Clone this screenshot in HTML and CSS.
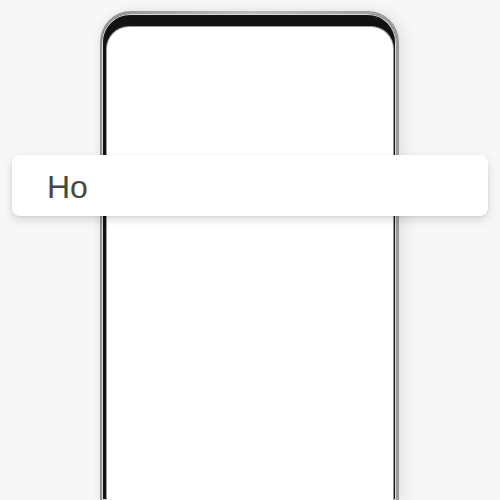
FILE: index.html
```html
<!DOCTYPE html>
<html>
<head>
<meta charset="utf-8">
<link rel="stylesheet" href="styles.css">
</head>
<body>
<div class="stage">
  <div class="phone">
    <div class="bezel">
      <div class="screen"></div>
    </div>
  </div>
  <div class="card"><span class="typed">Ho</span></div>
</div>
</body>
</html>
```
FILE: styles.css
```css
html, body {
  margin: 0;
  padding: 0;
  width: 500px;
  height: 500px;
  overflow: hidden;
  background: #f7f7f7;
  font-family: "Liberation Sans", Arial, sans-serif;
}
.stage {
  position: relative;
  width: 500px;
  height: 500px;
  overflow: hidden;
  display: flex;
  justify-content: flex-start;
  align-items: flex-start;
}
.phone {
  margin-left: 100px;
  margin-top: 11px;
  width: 299px;
  height: 489px;
  box-sizing: border-box;
  padding: 3px 3px 0 2px;
  border-radius: 31px 31px 0 0;
  background: linear-gradient(90deg, #909090, #bdbdbd 50%, #9a9a9a);
  box-shadow: 5px 2px 16px rgba(0, 0, 0, 0.09), -2px 0 6px rgba(0, 0, 0, 0.04);
  display: flex;
}
.bezel {
  flex: 1;
  border-radius: 28px 28px 0 0;
  background: #121212;
  padding: 13px 3px 0 5px;
  display: flex;
  box-shadow: inset 0 0 0 1px #dcdcdc;
}
.screen {
  flex: 1;
  background: #ffffff;
  border-radius: 22px 22px 0 0;
  box-shadow: 0 0 0 1px #9a9a9a;
}
.card {
  position: absolute;
  left: 12px;
  top: 155px;
  width: 476px;
  height: 61px;
  box-sizing: border-box;
  background: #ffffff;
  border-radius: 8px;
  box-shadow: 0 4px 10px rgba(0, 0, 0, 0.13), 0 1px 3px rgba(0, 0, 0, 0.06);
  display: flex;
  align-items: center;
  padding-left: 35px;
}
.typed {
  font-size: 32px;
  color: #464646;
  line-height: 1;
  padding-top: 3px;
}
```
